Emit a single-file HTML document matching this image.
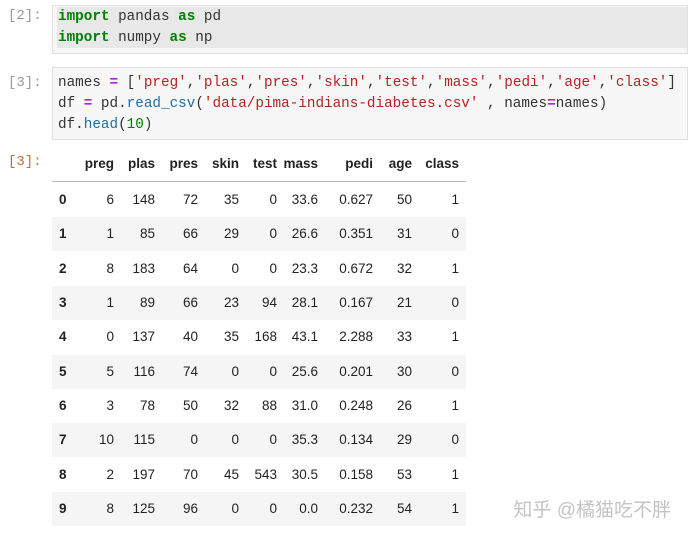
<!DOCTYPE html>
<html><head><meta charset="utf-8"><style>
body{margin:0;width:688px;height:535px;background:#fff;position:relative;overflow:hidden;font-family:"Liberation Sans",sans-serif}
.p{position:absolute;font-family:"Liberation Mono",monospace;font-size:14px;color:#999;}
.box{position:absolute;left:52px;right:0;background:#f7f7f7;border:1px solid #e0e0e0;}
.code{position:absolute;font-family:"Liberation Mono",monospace;font-size:14.3px;line-height:21px;color:#333;white-space:pre;}
.k{color:#008000;font-weight:bold}.s{color:#ba2121}.f{color:#1f6fa8}.n{color:#008000}.o{color:#aa22ff;font-weight:bold}
.row{position:absolute;left:52px;width:414px;height:34px;font-size:13.5px;color:#222}
.row.sh{background:#f5f5f5}
.c{position:absolute;top:0;line-height:34px;text-align:right;width:50px}
.i{position:absolute;left:7px;line-height:34px;font-weight:bold}
.h{font-weight:bold}
</style></head><body>
<div class="p" style="left:8px;top:8px">[2]:</div>
<div class="box" style="top:5px;height:47px"></div>
<div style="position:absolute;left:57px;top:7px;width:630px;height:41px;background:#e8e8e8"></div>
<div class="code" style="left:58px;top:7px"><span class="k">import</span> pandas <span class="k">as</span> pd
<span class="k">import</span> numpy <span class="k">as</span> np</div>
<div class="p" style="left:8px;top:75px">[3]:</div>
<div class="box" style="top:67px;height:71px"></div>
<div class="code" style="left:58px;top:73px">names <span class="o">=</span> [<span class="s">'preg'</span>,<span class="s">'plas'</span>,<span class="s">'pres'</span>,<span class="s">'skin'</span>,<span class="s">'test'</span>,<span class="s">'mass'</span>,<span class="s">'pedi'</span>,<span class="s">'age'</span>,<span class="s">'class'</span>]
df <span class="o">=</span> pd.<span class="f">read_csv</span>(<span class="s">'data/pima-indians-diabetes.csv'</span> , names<span class="o">=</span>names)
df.<span class="f">head</span>(<span class="n">10</span>)</div>
<div class="p" style="left:8px;top:154px;color:#c07040">[3]:</div>
<div class="row h" style="top:147px;border-bottom:1px solid #bbb">
<div class="c" style="left:12px">preg</div><div class="c" style="left:53px">plas</div><div class="c" style="left:96px">pres</div><div class="c" style="left:137px">skin</div><div class="c" style="left:175px">test</div><div class="c" style="left:216px">mass</div><div class="c" style="left:271px">pedi</div><div class="c" style="left:310px">age</div><div class="c" style="left:357px">class</div>
</div>
<div class="row" style="top:183px"><div class="i">0</div><div class="c" style="left:12px">6</div><div class="c" style="left:53px">148</div><div class="c" style="left:96px">72</div><div class="c" style="left:137px">35</div><div class="c" style="left:175px">0</div><div class="c" style="left:216px">33.6</div><div class="c" style="left:271px">0.627</div><div class="c" style="left:310px">50</div><div class="c" style="left:357px">1</div></div>
<div class="row sh" style="top:217px"><div class="i">1</div><div class="c" style="left:12px">1</div><div class="c" style="left:53px">85</div><div class="c" style="left:96px">66</div><div class="c" style="left:137px">29</div><div class="c" style="left:175px">0</div><div class="c" style="left:216px">26.6</div><div class="c" style="left:271px">0.351</div><div class="c" style="left:310px">31</div><div class="c" style="left:357px">0</div></div>
<div class="row" style="top:252px"><div class="i">2</div><div class="c" style="left:12px">8</div><div class="c" style="left:53px">183</div><div class="c" style="left:96px">64</div><div class="c" style="left:137px">0</div><div class="c" style="left:175px">0</div><div class="c" style="left:216px">23.3</div><div class="c" style="left:271px">0.672</div><div class="c" style="left:310px">32</div><div class="c" style="left:357px">1</div></div>
<div class="row sh" style="top:286px"><div class="i">3</div><div class="c" style="left:12px">1</div><div class="c" style="left:53px">89</div><div class="c" style="left:96px">66</div><div class="c" style="left:137px">23</div><div class="c" style="left:175px">94</div><div class="c" style="left:216px">28.1</div><div class="c" style="left:271px">0.167</div><div class="c" style="left:310px">21</div><div class="c" style="left:357px">0</div></div>
<div class="row" style="top:320px"><div class="i">4</div><div class="c" style="left:12px">0</div><div class="c" style="left:53px">137</div><div class="c" style="left:96px">40</div><div class="c" style="left:137px">35</div><div class="c" style="left:175px">168</div><div class="c" style="left:216px">43.1</div><div class="c" style="left:271px">2.288</div><div class="c" style="left:310px">33</div><div class="c" style="left:357px">1</div></div>
<div class="row sh" style="top:355px"><div class="i">5</div><div class="c" style="left:12px">5</div><div class="c" style="left:53px">116</div><div class="c" style="left:96px">74</div><div class="c" style="left:137px">0</div><div class="c" style="left:175px">0</div><div class="c" style="left:216px">25.6</div><div class="c" style="left:271px">0.201</div><div class="c" style="left:310px">30</div><div class="c" style="left:357px">0</div></div>
<div class="row" style="top:389px"><div class="i">6</div><div class="c" style="left:12px">3</div><div class="c" style="left:53px">78</div><div class="c" style="left:96px">50</div><div class="c" style="left:137px">32</div><div class="c" style="left:175px">88</div><div class="c" style="left:216px">31.0</div><div class="c" style="left:271px">0.248</div><div class="c" style="left:310px">26</div><div class="c" style="left:357px">1</div></div>
<div class="row sh" style="top:423px"><div class="i">7</div><div class="c" style="left:12px">10</div><div class="c" style="left:53px">115</div><div class="c" style="left:96px">0</div><div class="c" style="left:137px">0</div><div class="c" style="left:175px">0</div><div class="c" style="left:216px">35.3</div><div class="c" style="left:271px">0.134</div><div class="c" style="left:310px">29</div><div class="c" style="left:357px">0</div></div>
<div class="row" style="top:458px"><div class="i">8</div><div class="c" style="left:12px">2</div><div class="c" style="left:53px">197</div><div class="c" style="left:96px">70</div><div class="c" style="left:137px">45</div><div class="c" style="left:175px">543</div><div class="c" style="left:216px">30.5</div><div class="c" style="left:271px">0.158</div><div class="c" style="left:310px">53</div><div class="c" style="left:357px">1</div></div>
<div class="row sh" style="top:492px"><div class="i">9</div><div class="c" style="left:12px">8</div><div class="c" style="left:53px">125</div><div class="c" style="left:96px">96</div><div class="c" style="left:137px">0</div><div class="c" style="left:175px">0</div><div class="c" style="left:216px">0.0</div><div class="c" style="left:271px">0.232</div><div class="c" style="left:310px">54</div><div class="c" style="left:357px">1</div></div>
<div style="position:absolute;left:415px;top:495px;width:256px;text-align:right;font-family:'Liberation Sans','Noto Sans CJK SC',sans-serif;font-size:19px;color:#c4c4c4">知乎 @橘猫吃不胖</div>
</body></html>
